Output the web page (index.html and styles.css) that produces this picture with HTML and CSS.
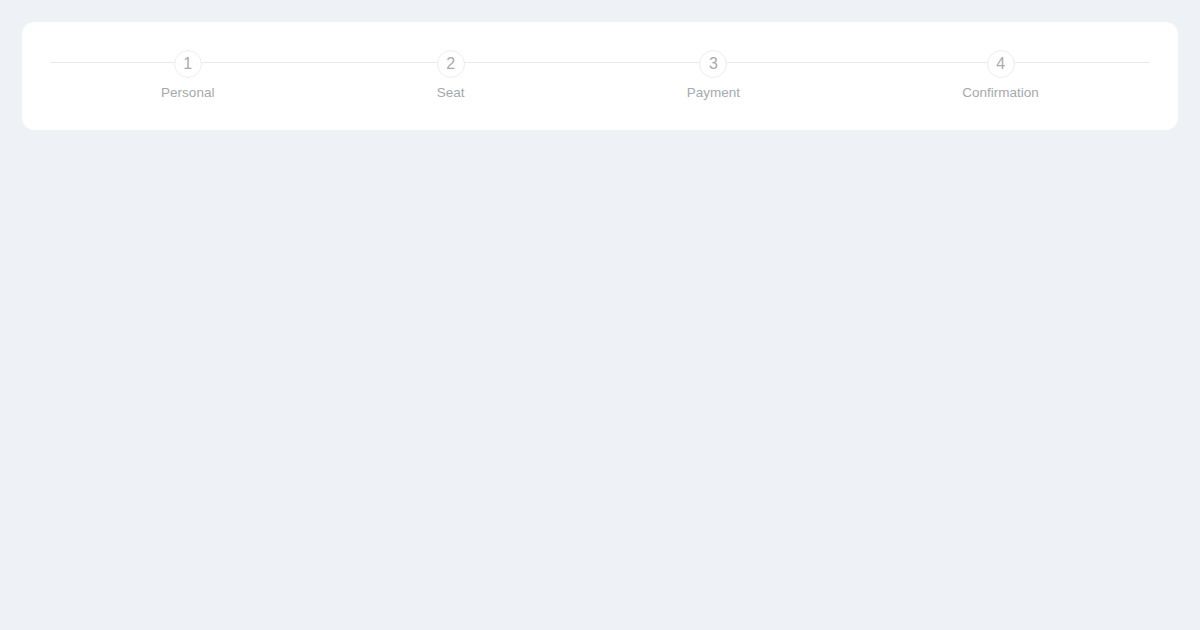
FILE: index.html
```html
<!DOCTYPE html>
<html lang="en">
<head>
<meta charset="utf-8">
<title>Booking steps</title>
<link rel="stylesheet" href="styles.css">
</head>
<body>
  <div class="card">
    <div class="stepper">
      <div class="track"></div>
      <div class="step"><div class="dot">1</div><div class="label">Personal</div></div>
      <div class="step"><div class="dot">2</div><div class="label">Seat</div></div>
      <div class="step"><div class="dot">3</div><div class="label">Payment</div></div>
      <div class="step"><div class="dot">4</div><div class="label">Confirmation</div></div>
    </div>
  </div>
</body>
</html>
```

FILE: styles.css
```css
html, body {
  margin: 0;
  padding: 0;
}
body {
  background: #eef1f6;
  font-family: "Liberation Sans", Arial, sans-serif;
  padding: 22px;
  height: 630px;
  box-sizing: border-box;
}
.card {
  background: #ffffff;
  border-radius: 12px;
  padding: 28px 28px 27px;
}
.stepper {
  position: relative;
  display: flex;
}
.track {
  position: absolute;
  left: 0;
  right: 0;
  top: 12px;
  height: 1px;
  background: #e8eaee;
}
.step {
  flex: 1 1 auto;
  display: flex;
  flex-direction: column;
  align-items: center;
  position: relative;
}
.dot {
  width: 26px;
  height: 26px;
  border: 1px solid #ebedf0;
  border-radius: 50%;
  background: #ffffff;
  color: #a9abae;
  font-size: 16px;
  line-height: 26px;
  text-align: center;
}
.label {
  margin-top: 5px;
  font-size: 13.5px;
  line-height: 20px;
  color: #a6a9ae;
}
```
